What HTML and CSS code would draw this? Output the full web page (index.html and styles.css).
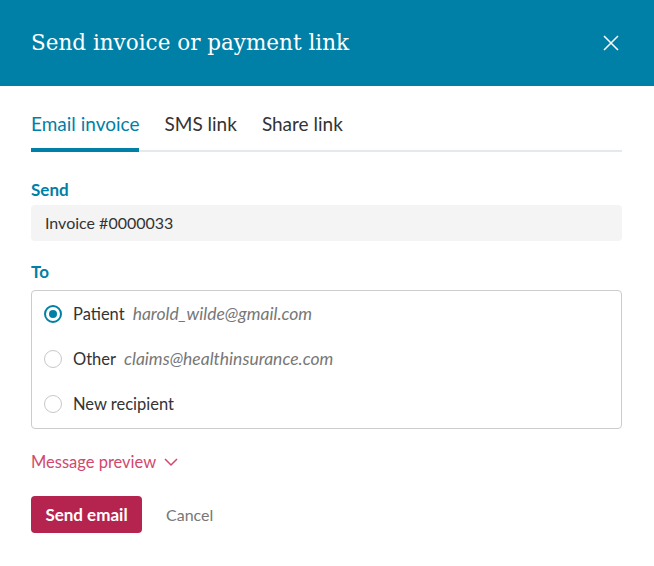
FILE: index.html
```html
<!DOCTYPE html>
<html>
<head>
<meta charset="utf-8">
<link rel="stylesheet" href="styles.css">
</head>
<body>
<div class="dialog">
  <header class="header">
    <h1 class="title">Send invoice or payment link</h1>
    <svg class="close" width="18" height="18" viewBox="0 0 18 18"><path d="M2 2L16 16M16 2L2 16" stroke="#fff" stroke-width="1.5" fill="none"/></svg>
  </header>
  <div class="body">
    <nav class="tabs">
      <span class="tab active">Email invoice</span>
      <span class="tab">SMS link</span>
      <span class="tab">Share link</span>
    </nav>
    <div class="label send-label">Send</div>
    <div class="field">Invoice #0000033</div>
    <div class="label to-label">To</div>
    <div class="options">
      <div class="opt"><span class="radio checked"></span><span class="name">Patient</span><span class="mail">harold_wilde@gmail.com</span></div>
      <div class="opt"><span class="radio"></span><span class="name">Other</span><span class="mail">claims@healthinsurance.com</span></div>
      <div class="opt"><span class="radio"></span><span class="name">New recipient</span></div>
    </div>
    <div class="preview">Message preview <svg width="16" height="10" viewBox="0 0 16 10"><path d="M2 2L8 8L14 2" stroke="#d2486d" stroke-width="1.5" fill="none"/></svg></div>
    <div class="actions">
      <button class="btn">Send email</button>
      <span class="cancel">Cancel</span>
    </div>
  </div>
</div>
</body>
</html>
```
FILE: styles.css
```css
* { box-sizing: border-box; }
body { margin: 0; background: #fff; font-family: Lato, "Noto Sans", sans-serif; width: 654px; height: 566px; overflow: hidden; }
.header { height: 86px; background: #0080a6; display: flex; align-items: center; justify-content: space-between; padding: 0 34px 0 31px; }
.title { margin: 0; font-family: "DejaVu Serif", serif; font-weight: normal; font-size: 21.5px; color: #fff; padding-bottom: 2px; }
.close { display: block; }
.body { padding: 0 32px 0 31px; }
.tabs { display: flex; gap: 25px; border-bottom: 2px solid #e6e9ec; padding-top: 26px; }
.tab { font-size: 19px; color: #333; padding-bottom: 16px; margin-bottom: -2px; }
.tab.active { color: #0080a6; border-bottom: 4px solid #0080a6; padding-bottom: 13px; }
.label { font-size: 17px; font-weight: bold; color: #0080a6; }
.send-label { margin-top: 27px; }
.field { margin-top: 5px; height: 36px; background: #f4f4f4; border-radius: 4px; display: flex; align-items: center; padding-left: 14px; padding-bottom: 2px; font-size: 16px; color: #333; }
.to-label { margin-top: 20px; }
.options { margin-top: 8px; border: 1px solid #ccc; border-radius: 4px; padding: 0 0 2px; }
.opt { display: flex; align-items: center; height: 45px; padding-left: 12px; font-size: 16.5px; }
.radio { width: 18px; height: 18px; border-radius: 50%; border: 1px solid #c8c8c8; background: #fff; margin-right: 11px; position: relative; }
.radio.checked { border: 2px solid #0080a6; }
.radio.checked::after { content: ""; position: absolute; left: 3px; top: 3px; width: 8px; height: 8px; border-radius: 50%; background: #0080a6; }
.name { color: #333; margin-right: 8px; }
.mail { color: #777; font-style: italic; font-size: 17.5px; }
.preview { margin-top: 23px; font-size: 16.5px; color: #d2486d; display: flex; align-items: center; gap: 7px; }
.actions { margin-top: 24px; display: flex; align-items: center; gap: 24px; }
.btn { height: 37px; width: 111px; background: #b5244f; color: #fff; border: none; border-radius: 4px; font-family: inherit; font-size: 17px; font-weight: bold; }
.cancel { font-size: 16px; color: #777; }
```
